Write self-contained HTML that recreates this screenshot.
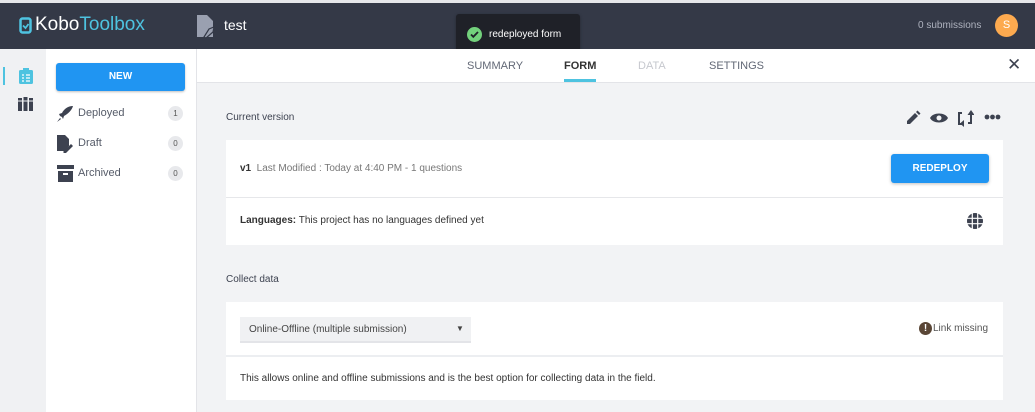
<!DOCTYPE html>
<html><head><style>
*{box-sizing:border-box;margin:0;padding:0}
body{width:1035px;height:412px;overflow:hidden;background:#f2f3f5;font-family:"Liberation Sans",sans-serif;position:relative;color:#3d4250}
.abs{position:absolute}
.hdr{left:0;top:0;width:1035px;height:49px;background:#343947;border-top:3px solid #e6e7ea}
.rail{left:0;top:49px;width:46px;height:363px;background:#f0f1f3}
.side{left:46px;top:49px;width:151px;height:363px;background:#fff;border-right:1px solid #e3e4e8}
.tabs{left:197px;top:49px;width:838px;height:34px;background:#fff;border-bottom:1px solid #e3e4e8}
.tab{position:absolute;top:11px;font-size:11px;color:#626876}
.card{background:#fff;left:226px;width:777px}
.badge{position:absolute;left:122px;width:15px;height:15px;border-radius:50%;background:#e8e9ec;font-size:8px;text-align:center;line-height:15px;color:#555}
.item{position:absolute;left:32px;font-size:11px;color:#555b68}
</style></head><body>
<div class="abs hdr">
  <svg class="abs" style="left:19px;top:14px" width="13" height="17" viewBox="0 0 13 17"><rect x="1.5" y="1.5" width="10" height="14" rx="2" fill="none" stroke="#4ec3e0" stroke-width="2.5"/><path d="M4 8.5l2.5 2.5 3-4" fill="none" stroke="#4ec3e0" stroke-width="1.8"/></svg>
  <div class="abs" style="left:35px;top:11px;font-size:19px;color:#fff;letter-spacing:0px">Kobo<span style="color:#4ec3e0">Toolbox</span></div>
  <svg class="abs" style="left:195px;top:10px" width="22" height="27" viewBox="0 0 22 27"><path d="M2 2h10l6 6v16H2z" fill="#9aa0b0"/><path d="M9 24l5-8 5-2-1 5-7 6z" fill="#9aa0b0" stroke="#343947" stroke-width="1.2"/></svg>
  <div class="abs" style="left:224px;top:14px;font-size:14px;color:#fff">test</div>
  <div class="abs" style="left:918px;top:17px;font-size:10px;color:#aeb2be">0 submissions</div>
  <div class="abs" style="left:995px;top:11px;width:23px;height:23px;border-radius:50%;background:#fdaa4f;color:#fff;font-size:11px;text-align:center;line-height:23px">S</div>
</div>
<div class="abs" style="left:456px;top:14px;width:124px;height:41px;background:#1f2128;border-radius:3px;box-shadow:0 1px 3px rgba(0,0,0,.3)">
  <div class="abs" style="left:11px;top:13px;width:15px;height:15px;border-radius:50%;background:#73d17c"></div>
  <svg class="abs" style="left:14px;top:16px" width="9" height="9" viewBox="0 0 9 9"><path d="M1 4.5l2.3 2.3L8 2" fill="none" stroke="#1f2128" stroke-width="1.8"/></svg>
  <div class="abs" style="left:33px;top:15px;font-size:10px;color:#fff">redeployed form</div>
</div>
<div class="abs rail">
  <div class="abs" style="left:3px;top:18px;width:2px;height:18px;background:#4ec3e0"></div>
  <svg class="abs" style="left:19px;top:19px" width="14" height="16" viewBox="0 0 14 16"><rect x="0" y="2" width="14" height="14" rx="1.5" fill="#4ec3e0"/><rect x="4" y="0" width="6" height="3.5" fill="#4ec3e0"/><path d="M3 7h2M7 7h4M3 10h2M7 10h4M3 13h2M7 13h4" stroke="#fff" stroke-width="1.3"/></svg>
  <svg class="abs" style="left:18px;top:48px" width="15" height="14" viewBox="0 0 15 14"><rect x="0" y="1" width="4" height="13" fill="#3d4250"/><rect x="5.5" y="0" width="4" height="14" fill="#3d4250"/><rect x="11" y="1" width="4" height="13" fill="#3d4250"/><path d="M0 4h15" stroke="#f0f1f3" stroke-width="1"/></svg>
</div>
<div class="abs side">
  <div class="abs" style="left:10px;top:14px;width:129px;height:28px;background:#2095f2;border-radius:3px;box-shadow:0 1px 2px rgba(0,0,0,.25);color:#fff;font-size:10px;font-weight:bold;text-align:center;line-height:28px">NEW</div>
  <svg class="abs" style="left:10px;top:56px" width="18" height="18" viewBox="0 0 18 18"><path d="M17 1c-5 0-9 3-11 7l-3 1 1 2 2 1 1 2 1-3c4-2 8-6 9-10z" fill="#3d4250"/><path d="M4 13l-3 4 4-3z" fill="#3d4250"/></svg>
  <div class="item" style="top:58px">Deployed</div><div class="badge" style="top:57px">1</div>
  <svg class="abs" style="left:11px;top:86px" width="17" height="18" viewBox="0 0 17 18"><path d="M0 0h8l4 4v7l-4 5H0z" fill="#3d4250"/><path d="M6 17l8-8 2 2-8 8z" fill="#3d4250"/></svg>
  <div class="item" style="top:88px">Draft</div><div class="badge" style="top:87px">0</div>
  <svg class="abs" style="left:11px;top:116px" width="17" height="17" viewBox="0 0 17 17"><rect x="0" y="0" width="17" height="4" fill="#3d4250"/><rect x="1" y="6" width="15" height="11" fill="#3d4250"/><rect x="6" y="8" width="5" height="2" fill="#fff"/></svg>
  <div class="item" style="top:118px">Archived</div><div class="badge" style="top:117px">0</div>
</div>
<div class="abs tabs">
  <div class="tab" style="left:270px">SUMMARY</div>
  <div class="tab" style="left:367px;color:#333;font-weight:bold">FORM</div>
  <div class="abs" style="left:367px;top:30px;width:32px;height:3px;background:#4ec3e0"></div>
  <div class="tab" style="left:441px;color:#c6c8ce">DATA</div>
  <div class="tab" style="left:512px">SETTINGS</div>
  <div class="abs" style="left:810px;top:6px;font-size:17px;color:#3d4250">✕</div>
</div>
<div class="abs" style="left:226px;top:112px;font-size:10px;color:#3d4250">Current version</div>
<svg class="abs" style="left:905px;top:110px" width="16" height="16" viewBox="0 0 16 16"><path d="M2 11l8-8 3 3-8 8H2z" fill="#3d4250"/><path d="M11 2l1.5-1.5 3 3L14 5z" fill="#3d4250"/></svg>
<svg class="abs" style="left:930px;top:112px" width="18" height="12" viewBox="0 0 18 12"><path d="M0 6c3-6 15-6 18 0-3 6-15 6-18 0z" fill="#3d4250"/><circle cx="9" cy="6" r="2.5" fill="#f2f3f5"/></svg>
<svg class="abs" style="left:956px;top:109px" width="18" height="18" viewBox="0 0 18 18"><path d="M6 4H3v11h3M12 14h3V6" fill="none" stroke="#3d4250" stroke-width="2"/><path d="M15 1l3.5 5h-7zM8 11v7l-4-3.5z" fill="#3d4250"/></svg>
<svg class="abs" style="left:984px;top:114px" width="17" height="6" viewBox="0 0 17 6"><circle cx="3" cy="3" r="2.4" fill="#3d4250"/><circle cx="8.5" cy="3" r="2.4" fill="#3d4250"/><circle cx="14" cy="3" r="2.4" fill="#3d4250"/></svg>
<div class="abs card" style="top:140px;height:105px">
  <div class="abs" style="left:14px;top:23px;font-size:10px;color:#777"><b style="color:#333">v1</b>&nbsp; Last Modified : Today at 4:40 PM - 1 questions</div>
  <div class="abs" style="left:665px;top:14px;width:98px;height:29px;background:#2095f2;border-radius:3px;box-shadow:0 1px 3px rgba(0,0,0,.25);color:#fff;font-size:10px;font-weight:bold;text-align:center;line-height:29px">REDEPLOY</div>
  <div class="abs" style="left:0;top:57px;width:777px;height:1px;background:#e6e7ea"></div>
  <div class="abs" style="left:14px;top:75px;font-size:10px;color:#333"><b>Languages:</b> This project has no languages defined yet</div>
  <svg class="abs" style="left:741px;top:73px" width="16" height="16" viewBox="0 0 16 16"><circle cx="8" cy="8" r="8" fill="#3d4250"/><path d="M5.3 0v16M10.7 0v16M0 5.3h16M0 10.7h16" stroke="#fff" stroke-width="1.2"/></svg>
</div>
<div class="abs" style="left:226px;top:274px;font-size:10px;color:#3d4250">Collect data</div>
<div class="abs card" style="top:302px;height:98px">
  <div class="abs" style="left:14px;top:15px;width:231px;height:26px;background:#f0f1f3;border-bottom:2px solid #e3e4e8;font-size:10px;color:#444;padding:7px 0 0 9px">Online-Offline (multiple submission)<span class="abs" style="left:216px;top:7px;font-size:8px">▼</span></div>
  <div class="abs" style="left:693px;top:20px;width:13px;height:13px;border-radius:50%;background:#5a4636;color:#fff;font-size:10px;font-weight:bold;text-align:center;line-height:13px">!</div>
  <div class="abs" style="left:707px;top:21px;font-size:10px;color:#555">Link missing</div>
  <div class="abs" style="left:0;top:53px;width:777px;height:2px;background:#eceef1"></div>
  <div class="abs" style="left:14px;top:71px;font-size:10px;color:#333">This allows online and offline submissions and is the best option for collecting data in the field.</div>
</div>
</body></html>
